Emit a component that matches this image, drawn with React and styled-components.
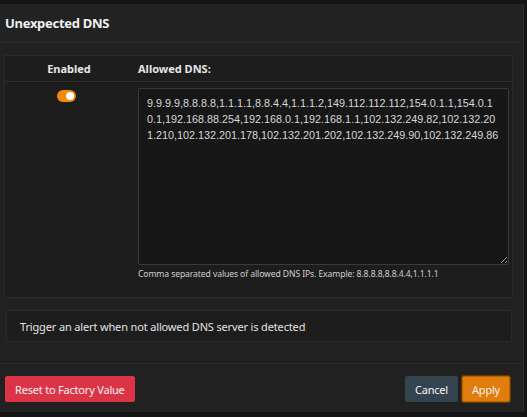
import React, { useState } from "react";
import styled, { createGlobalStyle } from "styled-components";

const GlobalStyle = createGlobalStyle`
  html, body {
    margin: 0;
    padding: 0;
    background: #141414;
    font-family: "Noto Sans", "Open Sans", sans-serif;
  }
  * {
    box-sizing: border-box;
  }
`;

const Modal = styled.div`
  width: 524px;
  height: 408px;
  margin-top: 4px;
  background: #212121;
  border-right: 1px solid #2e2e2e;
  display: flex;
  flex-direction: column;
`;

const Header = styled.div`
  height: 39px;
  padding: 0 5px;
  display: flex;
  align-items: center;
  border-bottom: 1px solid #2c2c2c;
  background: #222222;
`;

const Title = styled.h4`
  margin: 0;
  font-size: 13px;
  font-weight: 700;
  letter-spacing: -0.3px;
  color: #f0f0f0;
`;

const Body = styled.div`
  flex: 1;
  padding: 12px 10px 0 4px;
  display: flex;
  flex-direction: column;
  gap: 12px;
`;

const Card = styled.div`
  background: #1d1d1d;
  border: 1px solid #2a2a2a;
  margin-left: ${(props) => props.inset || 0}px;
  margin-right: ${(props) => props.insetRight || 0}px;
`;

const Table = styled.div`
  display: grid;
  grid-template-columns: 128px 1fr;
`;

const HeadCell = styled.div`
  height: 26px;
  padding-left: ${(props) => (props.center ? 0 : 5)}px;
  display: flex;
  align-items: center;
  justify-content: ${(props) => (props.center ? "center" : "flex-start")};
  font-size: 11px;
  font-weight: 700;
  color: #e6e6e6;
  border-bottom: 1px solid #2d2d2d;
`;

const Cell = styled.div`
  padding: ${(props) => (props.center ? "8px 6px 0 0" : "6px 4px 17px 5px")};
  display: flex;
  flex-direction: column;
  align-items: ${(props) => (props.center ? "center" : "stretch")};
`;

const Toggle = styled.button`
  width: 19px;
  height: 12px;
  padding: 0;
  border: none;
  border-radius: 6px;
  background: ${(props) => (props.on ? "#f08a0c" : "#555")};
  position: relative;
  cursor: pointer;

  &::after {
    content: "";
    position: absolute;
    top: 2px;
    left: ${(props) => (props.on ? "9px" : "2px")};
    width: 8px;
    height: 8px;
    border-radius: 50%;
    background: #ffffff;
  }
`;

const TextArea = styled.textarea`
  width: 371px;
  height: 177px;
  padding: 6px 8px 6px 8px;
  background: #171717;
  border: 1px solid #3a3a3a;
  border-radius: 2px;
  color: #d8d8d8;
  font-family: "Liberation Sans", Arial, sans-serif;
  font-size: 10.8px;
  line-height: 16px;
  word-break: break-all;
  resize: vertical;
  outline: none;
`;

const Help = styled.div`
  margin-top: 3px;
  font-size: 8.6px;
  color: #cfcfcf;
  letter-spacing: -0.1px;
`;

const AlertText = styled.div`
  height: 30px;
  padding: 0 13px;
  display: flex;
  align-items: center;
  font-size: 11px;
  letter-spacing: -0.15px;
  color: #e2e2e2;
`;

const Footer = styled.div`
  border-top: 1px solid #2c2c2c;
  padding: 12px 13px 10px 5px;
  display: flex;
  align-items: center;
`;

const Spacer = styled.div`
  flex: 1;
`;

const Button = styled.button`
  height: 26px;
  padding: 0 ${(props) => props.pad || 9}px;
  margin-left: ${(props) => props.gap || 0}px;
  border-radius: 2px;
  border: 1px solid ${(props) => props.edge};
  background: ${(props) => props.bg};
  color: #f4f4f4;
  font-family: "Noto Sans", sans-serif;
  font-size: 11px;
  letter-spacing: -0.2px;
  cursor: pointer;
  box-shadow: ${(props) => (props.glow ? "0 0 0 1px #6a3b00" : "none")};
`;

const dnsValue =
  "9.9.9.9,8.8.8.8,1.1.1.1,8.8.4.4,1.1.1.2,149.112.112.112,154.0.1.1,154.0.10.1,192.168.88.254,192.168.0.1,192.168.1.1,102.132.249.82,102.132.201.210,102.132.201.178,102.132.201.202,102.132.249.90,102.132.249.86";

export default function App() {
  const [enabled, setEnabled] = useState(true);
  const [dns, setDns] = useState(dnsValue);

  return (
    <>
      <GlobalStyle />
      <Modal>
        <Header>
          <Title>Unexpected DNS</Title>
        </Header>
        <Body>
          <Card>
            <Table>
              <HeadCell center>Enabled</HeadCell>
              <HeadCell>Allowed DNS:</HeadCell>
              <Cell center>
                <Toggle on={enabled ? 1 : 0} onClick={() => setEnabled(!enabled)} />
              </Cell>
              <Cell>
                <TextArea value={dns} onChange={(e) => setDns(e.target.value)} />
                <Help>
                  Comma separated values of allowed DNS IPs. Example: 8.8.8.8,8.8.4.4,1.1.1.1
                </Help>
              </Cell>
            </Table>
          </Card>
          <Card inset={2} insetRight={1}>
            <AlertText>Trigger an alert when not allowed DNS server is detected</AlertText>
          </Card>
        </Body>
        <Footer>
          <Button bg="#dc3447" edge="#dc3447">
            Reset to Factory Value
          </Button>
          <Spacer />
          <Button bg="#34444f" edge="#34444f">
            Cancel
          </Button>
          <Button bg="#e07d0c" edge="#b86400" gap={4} glow>
            Apply
          </Button>
        </Footer>
      </Modal>
    </>
  );
}
